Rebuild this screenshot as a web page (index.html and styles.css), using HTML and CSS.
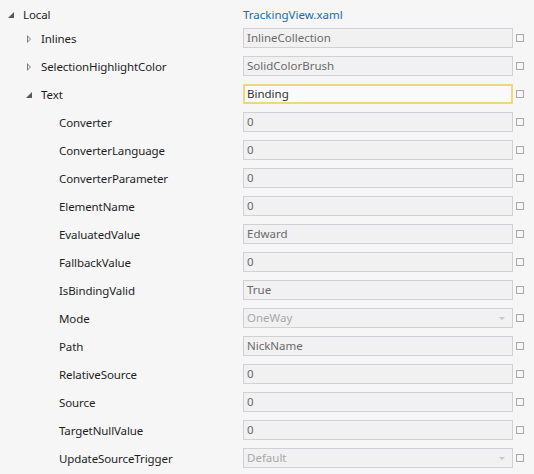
FILE: index.html
```html
<!DOCTYPE html>
<html lang="en">
<head>
    <meta charset="UTF-8">
    <title>Properties</title>
    <link rel="stylesheet" href="styles.css">
</head>
<body>

    <div class="grid">
        <div class="row header">
            <div class="name lvl0"><span class="arrow open"></span>Local</div>
            <div class="source">TrackingView.xaml</div>
        </div>

        <div class="row">
            <div class="name lvl1"><span class="arrow closed"></span>Inlines</div>
            <div class="box">InlineCollection</div>
            <span class="check"></span>
        </div>
        <div class="row">
            <div class="name lvl1"><span class="arrow closed"></span>SelectionHighlightColor</div>
            <div class="box">SolidColorBrush</div>
            <span class="check"></span>
        </div>
        <div class="row">
            <div class="name lvl1"><span class="arrow open"></span>Text</div>
            <div class="box binding">Binding</div>
            <span class="check"></span>
        </div>

        <div class="row">
            <div class="name lvl2">Converter</div>
            <div class="box">0</div>
            <span class="check"></span>
        </div>
        <div class="row">
            <div class="name lvl2">ConverterLanguage</div>
            <div class="box">0</div>
            <span class="check"></span>
        </div>
        <div class="row">
            <div class="name lvl2">ConverterParameter</div>
            <div class="box">0</div>
            <span class="check"></span>
        </div>
        <div class="row">
            <div class="name lvl2">ElementName</div>
            <div class="box">0</div>
            <span class="check"></span>
        </div>
        <div class="row">
            <div class="name lvl2">EvaluatedValue</div>
            <div class="box">Edward</div>
            <span class="check"></span>
        </div>
        <div class="row">
            <div class="name lvl2">FallbackValue</div>
            <div class="box">0</div>
            <span class="check"></span>
        </div>
        <div class="row">
            <div class="name lvl2">IsBindingValid</div>
            <div class="box">True</div>
            <span class="check"></span>
        </div>
        <div class="row">
            <div class="name lvl2">Mode</div>
            <div class="box combo">OneWay<span class="drop"></span></div>
            <span class="check"></span>
        </div>
        <div class="row">
            <div class="name lvl2">Path</div>
            <div class="box">NickName</div>
            <span class="check"></span>
        </div>
        <div class="row">
            <div class="name lvl2">RelativeSource</div>
            <div class="box">0</div>
            <span class="check"></span>
        </div>
        <div class="row">
            <div class="name lvl2">Source</div>
            <div class="box">0</div>
            <span class="check"></span>
        </div>
        <div class="row">
            <div class="name lvl2">TargetNullValue</div>
            <div class="box">0</div>
            <span class="check"></span>
        </div>
        <div class="row">
            <div class="name lvl2">UpdateSourceTrigger</div>
            <div class="box combo">Default<span class="drop"></span></div>
            <span class="check"></span>
        </div>
    </div>

</body>
</html>
```

FILE: styles.css
```css
body {
    margin: 0;
    background-color: #f6f6f6;
    font-family: "Noto Sans", "Open Sans", sans-serif;
    font-size: 11.5px;
    color: #1e1e1e;
}
.grid {
    width: 534px;
}
.row {
    display: flex;
    align-items: center;
    height: 28px;
    padding-top: 1px;
    box-sizing: border-box;
}
.row.header {
    height: 24px;
    padding-top: 5px;
}
.name {
    width: 243px;
    box-sizing: border-box;
    display: flex;
    align-items: center;
    white-space: nowrap;
    letter-spacing: -0.1px;
}
.lvl0 { padding-left: 7px; }
.lvl1 { padding-left: 25px; }
.lvl2 { padding-left: 59px; }
.arrow {
    width: 16px;
    height: 10px;
    position: relative;
    flex: none;
}
.arrow.closed::before {
    content: "";
    position: absolute;
    left: 2px;
    top: 1px;
    border-left: 4px solid #7a7a7a;
    border-top: 4px solid transparent;
    border-bottom: 4px solid transparent;
}
.arrow.closed::after {
    content: "";
    position: absolute;
    left: 3px;
    top: 3px;
    border-left: 2px solid #f6f6f6;
    border-top: 2px solid transparent;
    border-bottom: 2px solid transparent;
}
.arrow.open::before {
    content: "";
    position: absolute;
    left: 1px;
    top: 2px;
    border-right: 6px solid #595959;
    border-top: 6px solid transparent;
}
.source {
    color: #1c6bb0;
}
.box {
    width: 270px;
    height: 20px;
    margin-top: -1px;
    box-sizing: border-box;
    border: 1px solid #d0d0d6;
    background-color: #f1f1f1;
    color: #6a6a6a;
    padding-left: 3px;
    line-height: 18px;
    position: relative;
}
.box.binding {
    border: 2px solid #f2d67c;
    background-color: #fafafa;
    color: #333;
    padding-left: 2px;
    line-height: 16px;
}
.box.combo {
    color: #a8a8a8;
}
.drop {
    position: absolute;
    right: 7px;
    top: 8px;
    border-top: 3px solid #c8c8c8;
    border-left: 3px solid transparent;
    border-right: 3px solid transparent;
}
.check {
    width: 8px;
    height: 8px;
    margin-top: -1px;
    box-sizing: border-box;
    border: 1px solid #a8a8a8;
    margin-left: 3px;
}
```
